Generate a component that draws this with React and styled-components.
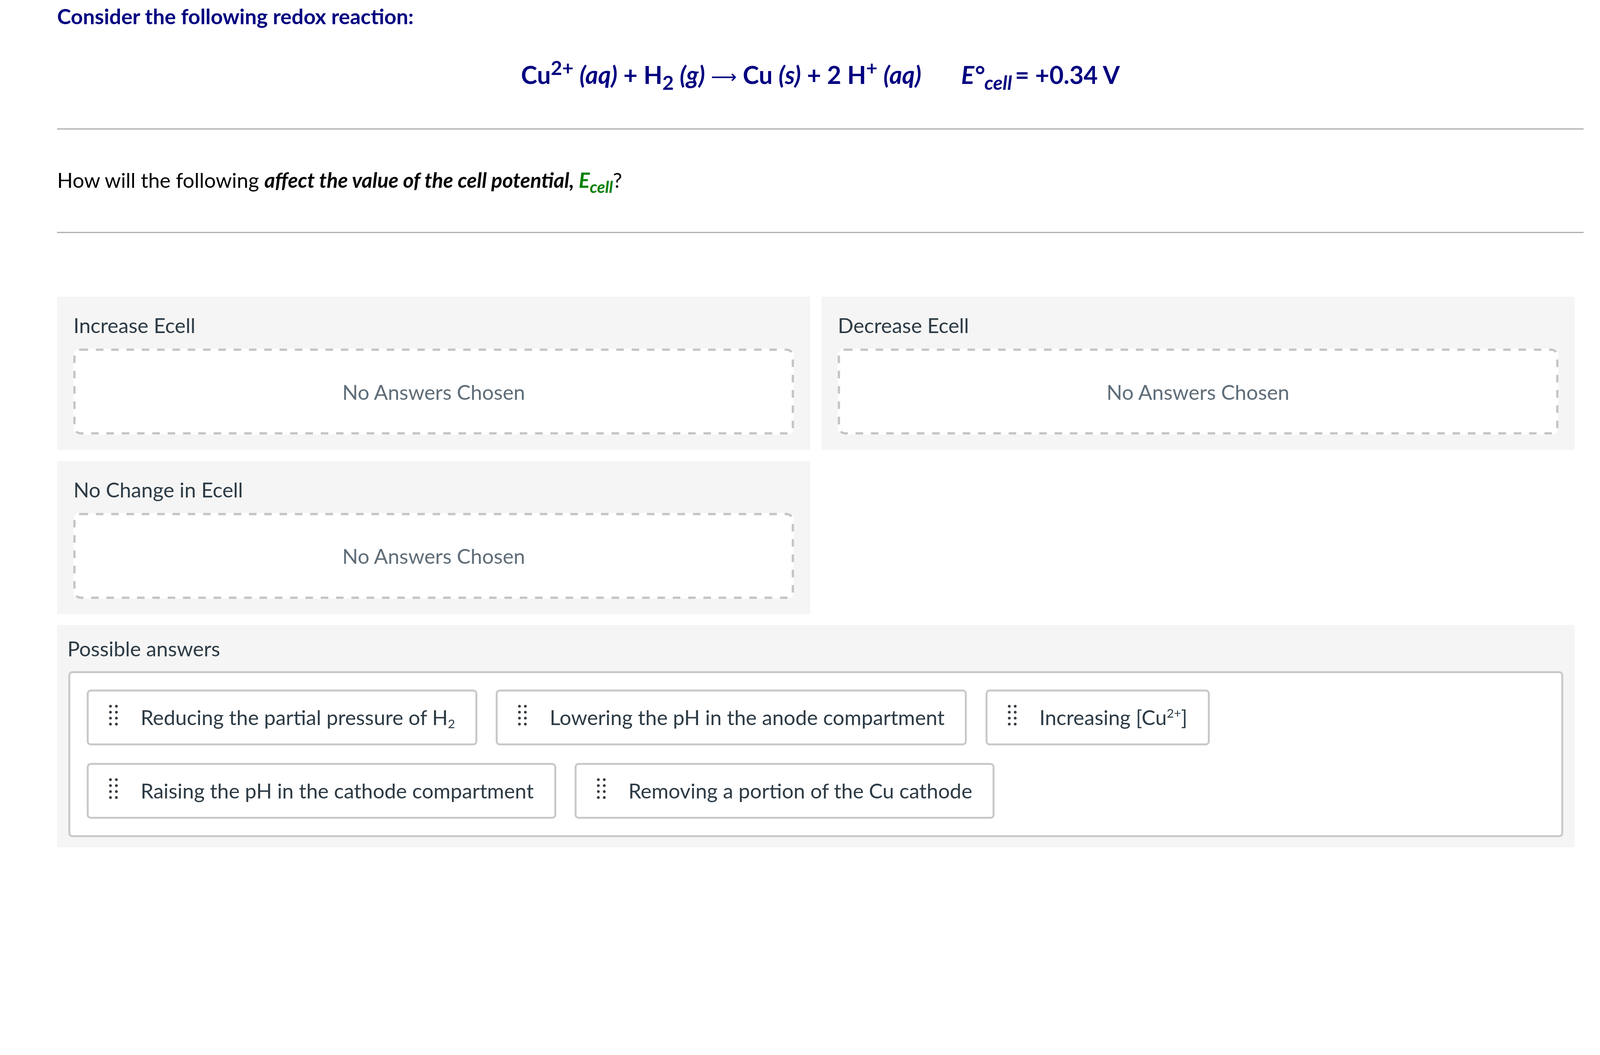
import React from "react";
import styled, { createGlobalStyle } from "styled-components";

const DESIGN_WIDTH = 1568;

const GlobalStyle = createGlobalStyle`
  html, body { margin: 0; padding: 0; background: #ffffff; overflow: hidden; }
  body { font-family: Lato, "Open Sans", "Liberation Sans", sans-serif; }
  * { box-sizing: border-box; }
`;

const Page = styled.div`
  width: ${DESIGN_WIDTH}px;
  padding: 4px 16px 20px 56px;
  font-family: Lato, "Liberation Sans", sans-serif;
`;

const Title = styled.h1`
  margin: 0;
  font-size: 20.6px;
  line-height: 24px;
  font-weight: 700;
  color: #000080;
`;

const Equation = styled.div`
  margin: 27px 0 0;
  height: 36px;
  line-height: 36px;
  text-align: center;
  font-size: 24px;
  font-weight: 700;
  color: #000080;
  white-space: nowrap;
`;

const Sup = styled.sup`
  font-size: ${(p) => p.$size || "0.8em"};
  line-height: 0;
  vertical-align: ${(p) => p.$lift || "0.45em"};
`;

const Sub = styled.sub`
  font-size: ${(p) => p.$size || "0.8em"};
  line-height: 0;
  vertical-align: ${(p) => p.$drop || "-0.3em"};
`;

const It = styled.i`
  font-style: italic;
`;

const Arrow = styled.span`
  font-size: 0.74em;
  font-weight: 400;
  vertical-align: 0.05em;
`;

const Potential = styled.span`
  margin-left: 39px;
`;

const CellSub = styled(Sub)`
  margin-right: 3px;
`;

const Rule = styled.hr`
  margin: ${(p) => p.$top}px 0 0;
  height: 0;
  border: none;
  border-top: 1px solid #9c9c9c;
  border-bottom: 1px solid #e6e6e6;
`;

const Question = styled.p`
  margin: 34px 0 0;
  font-size: 20.2px;
  line-height: 30px;
  color: #000000;
`;

const Emph = styled.b`
  font-weight: 700;
  font-style: italic;
`;

const Green = styled.span`
  color: #008000;
  font-weight: 700;
  font-style: italic;
`;

const Board = styled.div`
  margin: 62px 9px 0 0;
  display: grid;
  grid-template-columns: 1fr 1fr;
  gap: 11px;
`;

const Panel = styled.section`
  background: #f5f5f5;
  padding: 16px 16px 15px;
  display: flex;
  flex-direction: column;
  gap: 11px;
`;

const PanelTitle = styled.h2`
  margin: 0;
  font-size: 20.2px;
  line-height: 24px;
  font-weight: 400;
  color: #2d3b45;
`;

const DropZone = styled.div`
  position: relative;
  height: 84px;
  border-radius: 6px;
  background: #ffffff;
  display: flex;
  align-items: center;
  justify-content: center;
  font-size: 20.2px;
  color: #5f6d78;
`;

const DashFrame = styled.svg`
  position: absolute;
  inset: 0;
  width: 100%;
  height: 100%;
  pointer-events: none;
  overflow: visible;

  rect {
    x: 1px;
    y: 1px;
    width: calc(100% - 2px);
    height: calc(100% - 2px);
    rx: 6px;
    fill: none;
    stroke: #c4c4c4;
    stroke-width: 2.2px;
    stroke-dasharray: 7.4 7.6;
  }
`;

const Pool = styled.section`
  grid-column: 1 / -1;
  background: #f5f5f5;
  padding: 11px 11px 10px;
  display: flex;
  flex-direction: column;
  gap: 10px;
`;

const PoolTitle = styled(PanelTitle)`
  margin-left: -1px;
`;

const PoolBox = styled.div`
  background: #ffffff;
  border: 2px solid #c9c9c9;
  border-radius: 4px;
  padding: 16px 16px 16px;
  display: flex;
  flex-wrap: wrap;
  gap: 17px 18px;
`;

const Chip = styled.div`
  height: 55px;
  display: flex;
  align-items: center;
  gap: 22px;
  padding: 0 20px 0 20px;
  background: #ffffff;
  border: 2px solid #c9c9c9;
  border-radius: 4px;
  font-size: 20.2px;
  color: #2d3b45;
  white-space: nowrap;
`;

const HandleSvg = styled.svg`
  flex: none;
  width: 9px;
  height: 21px;
  margin-top: -4px;
`;

function Handle() {
  const xs = [1.45, 7.25];
  const ys = [1.45, 7.3, 13.15, 19];
  return (
    <HandleSvg viewBox="0 0 9 21" aria-hidden="true">
      {ys.map((y) =>
        xs.map((x) => <circle key={`${x}-${y}`} cx={x} cy={y} r="1.35" fill="#383d42" />)
      )}
    </HandleSvg>
  );
}

const ChipLabel = styled.span`
  line-height: 24px;
`;

const answers = [
  <>Reducing the partial pressure of H<Sub $size="0.6em" $drop="-0.25em">2</Sub></>,
  <>Lowering the pH in the anode compartment</>,
  <>Increasing [Cu<Sup $size="0.6em" $lift="0.6em">2+</Sup>]</>,
  <>Raising the pH in the cathode compartment</>,
  <>Removing a portion of the Cu cathode</>,
];

const zones = [
  { title: "Increase Ecell" },
  { title: "Decrease Ecell" },
  { title: "No Change in Ecell" },
];

function useScale() {
  if (typeof document === "undefined") return 1;
  const w = document.documentElement.clientWidth || window.innerWidth;
  return w / DESIGN_WIDTH;
}

export default function App() {
  const scale = useScale();
  return (
    <>
      <GlobalStyle />
      <Page style={{ zoom: scale }}>
        <Title>Consider the following redox reaction:</Title>
        <Equation>
          Cu<Sup>2+</Sup> <It>(aq)</It> + H<Sub>2</Sub> <It>(g)</It> <Arrow>⟶</Arrow> Cu{" "}
          <It>(s)</It> + 2 H<Sup>+</Sup> <It>(aq)</It>
          <Potential>
            <It>E°</It>
            <CellSub>
              <It>cell</It>
            </CellSub>
            = +0.34 V
          </Potential>
        </Equation>
        <Rule $top={35} />
        <Question>
          How will the following <Emph>affect the value of the cell potential, </Emph>
          <Green>
            E<Sub $size="0.8em" $drop="-0.3em">cell</Sub>
          </Green>
          ?
        </Question>
        <Rule $top={36} />
        <Board>
          {zones.map((z) => (
            <Panel key={z.title}>
              <PanelTitle>{z.title}</PanelTitle>
              <DropZone>
                <DashFrame aria-hidden="true">
                  <rect />
                </DashFrame>
                No Answers Chosen
              </DropZone>
            </Panel>
          ))}
          <Pool>
            <PoolTitle>Possible answers</PoolTitle>
            <PoolBox>
              {answers.map((a, i) => (
                <Chip key={i}>
                  <Handle />
                  <ChipLabel>{a}</ChipLabel>
                </Chip>
              ))}
            </PoolBox>
          </Pool>
        </Board>
      </Page>
    </>
  );
}
